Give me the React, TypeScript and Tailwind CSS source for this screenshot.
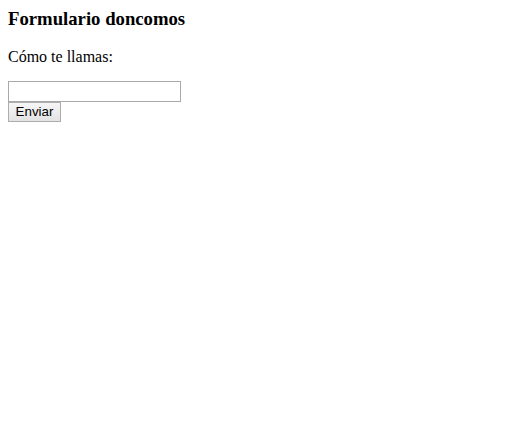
export default function App() {
  return (
    <div className="min-h-[431px] bg-white px-2 pt-2 text-black">
      <h3 className="m-0 text-[18.72px] font-bold leading-[21.5px] [font-family:'Liberation_Serif',serif]">
        Formulario doncomos
      </h3>
      <form className="mt-[18px] flex flex-col items-start">
        <p className="text-[16px] leading-[18.4px] [font-family:'Liberation_Serif',serif]">
          Cómo te llamas:
        </p>
        <input
          type="text"
          className="mt-[15px] h-[21px] w-[173px] border border-[#a9a9a9] bg-white px-[2px] text-[13.33px] outline-none"
        />
        <button
          type="button"
          className="h-[20px] w-[53px] border border-[#adadad] bg-gradient-to-b from-[#f6f6f6] to-[#e3e3e3] text-[13.33px] leading-[18px] text-black [font-family:'Liberation_Sans',Arial,sans-serif]"
        >
          Enviar
        </button>
      </form>
    </div>
  );
}
